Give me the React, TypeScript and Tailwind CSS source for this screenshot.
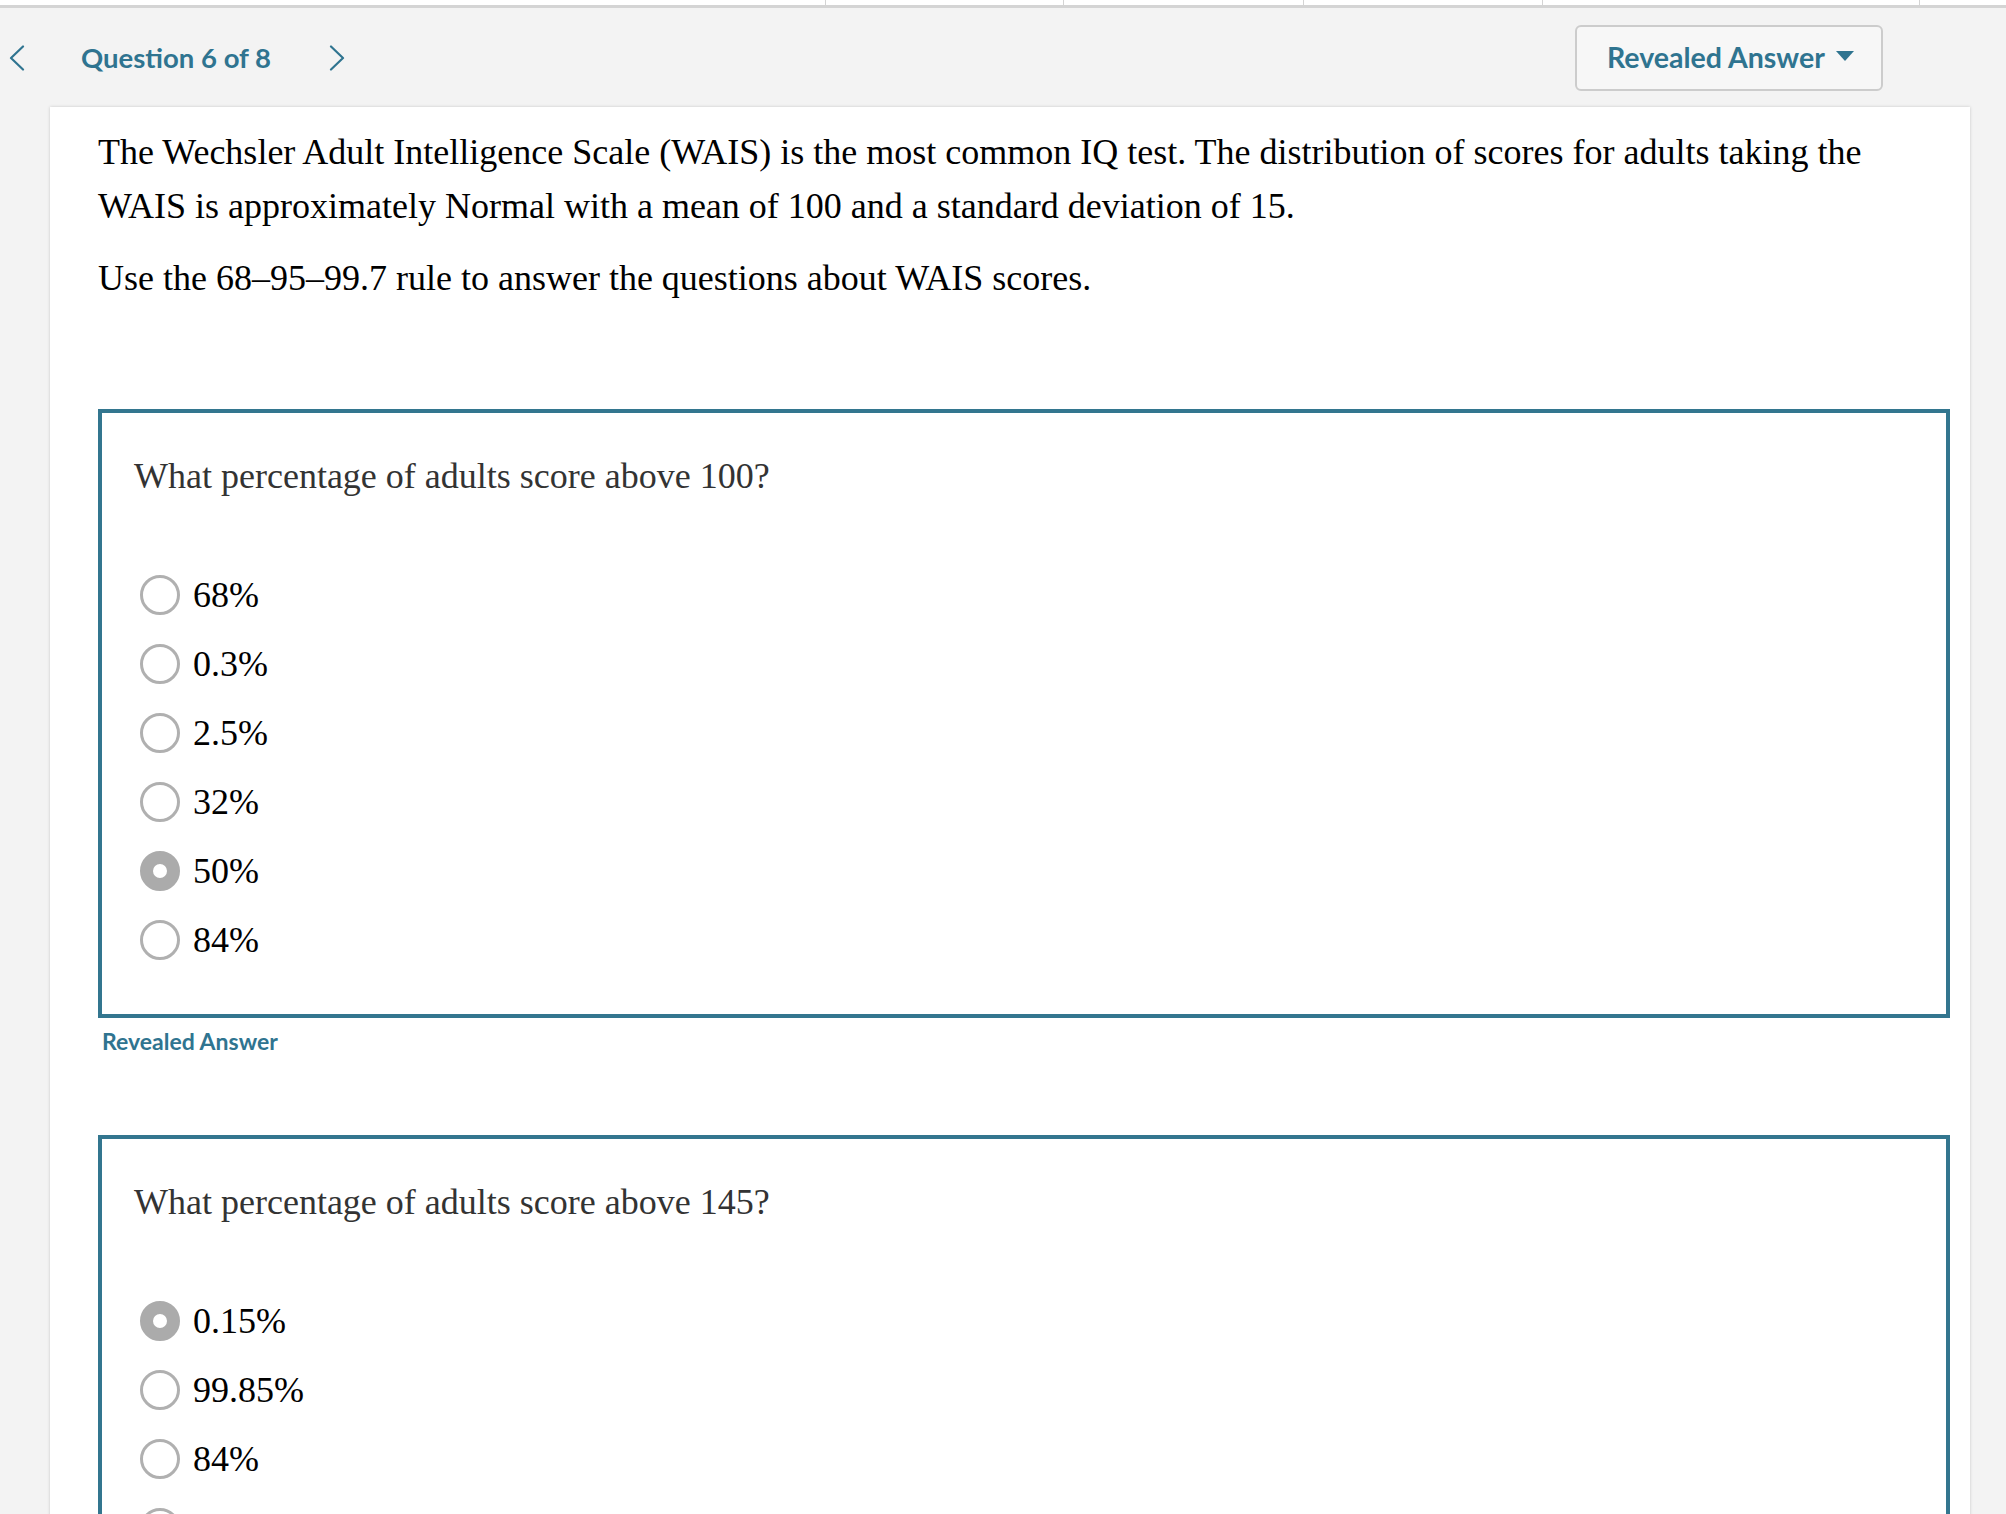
import React from 'react';

const TEAL = 'text-[#2f7490]';

type Option = { label: string; checked?: boolean };

function Radio({ checked }: { checked?: boolean }) {
  if (checked) {
    return <span className="block h-[40px] w-[40px] shrink-0 rounded-full border-[13px] border-[#ababab] bg-white" />;
  }
  return <span className="block h-[40px] w-[40px] shrink-0 rounded-full border-[3.5px] border-[#b0b0b0] bg-white" />;
}

function QuestionBox({ question, options }: { question: string; options: Option[] }) {
  return (
    <div className="border-[4px] border-[#33768f] px-[32px] pb-[40px] pt-[36px]">
      <p className="mb-[57px] text-[36px] leading-[54px] text-[#333333]">{question}</p>
      <ul>
        {options.map((o) => (
          <li key={o.label} className="flex h-[69px] items-center gap-[13px] pl-[6px] text-[36px] text-black">
            <Radio checked={o.checked} />
            <span>{o.label}</span>
          </li>
        ))}
      </ul>
    </div>
  );
}

function Chevron({ dir }: { dir: 'left' | 'right' }) {
  return (
    <svg width="16" height="26" viewBox="0 0 16 26" fill="none" className="shrink-0">
      <polyline
        points={dir === 'left' ? '14,1.5 2,13 14,24.5' : '2,1.5 14,13 2,24.5'}
        stroke="#2f7490"
        strokeWidth="2.2"
        strokeLinecap="round"
        strokeLinejoin="round"
      />
    </svg>
  );
}

export default function App() {
  const sans = "font-['Lato','Open_Sans',sans-serif]";
  return (
    <div className="min-h-screen w-full overflow-hidden bg-[#f3f3f3] font-['Liberation_Serif','Times_New_Roman',serif]">
      {/* tab strip */}
      <div className="flex h-[8px] border-b-[3px] border-[#d4d4d4] bg-white">
        <div className="w-[826px] border-r border-[#d4d4d4]" />
        <div className="w-[238px] border-r border-[#d4d4d4]" />
        <div className="w-[240px] border-r border-[#d4d4d4]" />
        <div className="w-[239px] border-r border-[#d4d4d4]" />
        <div className="w-[377px] border-r border-[#d4d4d4]" />
        <div className="flex-1" />
      </div>

      {/* header */}
      <div className={`flex h-[99px] items-center ${sans}`}>
        <div className="ml-[9px]">
          <Chevron dir="left" />
        </div>
        <span className={`ml-[56px] text-[27.5px] font-bold ${TEAL}`}>Question 6 of 8</span>
        <div className="ml-[58px]">
          <Chevron dir="right" />
        </div>
        <button className="ml-auto mr-[123px] flex h-[66px] w-[308px] items-center rounded-[6px] border-2 border-[#cccccc] bg-[#f7f7f7] pl-[30px]">
          <span className={`text-[28.5px] font-bold ${TEAL}`}>Revealed Answer</span>
          <svg width="18" height="10" viewBox="0 0 18 10" className="ml-[11px] -mt-[4px]">
            <polygon points="0,0 18,0 9,10" fill="#2f7490" />
          </svg>
        </button>
      </div>

      {/* card */}
      <div className="ml-[50px] w-[1920px] bg-white pb-[60px] pl-[48px] pr-[20px] pt-[18px] shadow-[0_0_3px_rgba(0,0,0,0.18)]">
        <p className="text-[36px] leading-[54px] text-black">
          The Wechsler Adult Intelligence Scale (WAIS) is the most common IQ test. The distribution of scores for adults
          taking the WAIS is approximately Normal with a mean of 100 and a standard deviation of 15.
        </p>
        <p className="mt-[18px] text-[36px] leading-[54px] text-black">
          Use the 68–95–99.7 rule to answer the questions about WAIS scores.
        </p>

        <div className="mt-[104px]">
          <QuestionBox
            question="What percentage of adults score above 100?"
            options={[
              { label: '68%' },
              { label: '0.3%' },
              { label: '2.5%' },
              { label: '32%' },
              { label: '50%', checked: true },
              { label: '84%' },
            ]}
          />
        </div>
        <p className={`ml-[4px] mt-[11px] text-[23px] font-bold leading-[24px] ${TEAL} ${sans}`}>Revealed Answer</p>

        <div className="mt-[82px]">
          <QuestionBox
            question="What percentage of adults score above 145?"
            options={[
              { label: '0.15%', checked: true },
              { label: '99.85%' },
              { label: '84%' },
              { label: '2.5%' },
            ]}
          />
        </div>
      </div>
    </div>
  );
}
